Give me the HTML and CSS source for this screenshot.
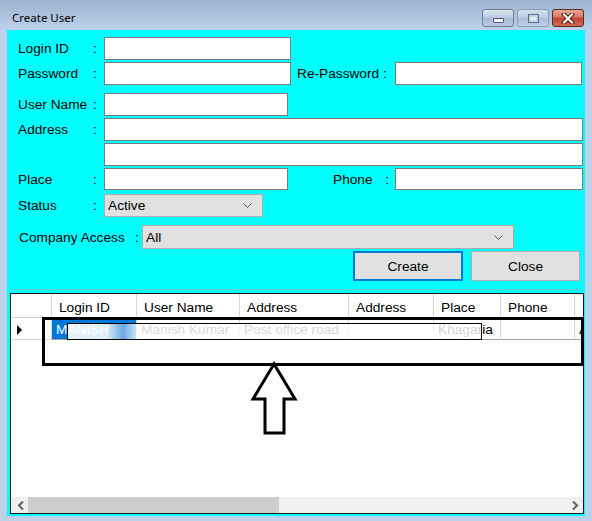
FILE: index.html
```html
<!DOCTYPE html>
<html>
<head>
<meta charset="utf-8">
<link rel="stylesheet" href="styles.css">
</head>
<body>
<div class="window">
  <div class="titlebar">
    <span class="title">Create User</span>
    <div class="tbtns">
      <div class="tbtn min"><span class="dash"></span></div>
      <div class="tbtn max"><span class="sq"></span></div>
      <div class="tbtn close">
        <svg width="14" height="11" viewBox="0 0 14 11"><path d="M3 1.5 L11 9.5 M11 1.5 L3 9.5" stroke="#4a1a14" stroke-width="4" stroke-linecap="square"/><path d="M3 1.5 L11 9.5 M11 1.5 L3 9.5" stroke="#fff" stroke-width="2.2" stroke-linecap="square"/></svg>
      </div>
    </div>
  </div>
  <div class="client">
    <div class="row r1">
      <span class="lbl">Login ID</span><span class="colon">:</span>
      <div class="input w187"></div>
    </div>
    <div class="row r2">
      <span class="lbl">Password</span><span class="colon">:</span>
      <div class="input w187"></div>
      <span class="relbl">Re-Password :</span>
      <div class="input w187"></div>
    </div>
    <div class="row r3">
      <span class="lbl">User Name</span><span class="colon">:</span>
      <div class="input w184"></div>
    </div>
    <div class="row r4">
      <span class="lbl">Address</span><span class="colon">:</span>
      <div class="input w479"></div>
    </div>
    <div class="row r5">
      <span class="lbl"></span><span class="colon"></span>
      <div class="input w479"></div>
    </div>
    <div class="row r6">
      <span class="lbl">Place</span><span class="colon">:</span>
      <div class="input w184 h22"></div>
      <span class="phone"><span>Phone</span><span class="pcolon">:</span></span>
      <div class="input w188 h22"></div>
    </div>
    <div class="row r7">
      <span class="lbl">Status</span><span class="colon">:</span>
      <div class="select w159"><span>Active</span>
        <svg class="chev" width="9" height="5" viewBox="0 0 9 5"><path d="M0.5 0.5 L4.5 4.5 L8.5 0.5" fill="none" stroke="#555" stroke-width="1"/></svg>
      </div>
    </div>
    <div class="row r8">
      <span class="lbl wide">Company Access</span><span class="colon narrow">:</span>
      <div class="select w372"><span>All</span>
        <svg class="chev" width="9" height="5" viewBox="0 0 9 5"><path d="M0.5 0.5 L4.5 4.5 L8.5 0.5" fill="none" stroke="#555" stroke-width="1"/></svg>
      </div>
    </div>
    <div class="row r9">
      <button class="btn create">Create</button>
      <button class="btn closebtn">Close</button>
    </div>
    <div class="sep"></div>
    <div class="grid">
      <div class="gtable">
        <div class="ghead">
          <div class="c rh"></div>
          <div class="c">Login ID</div>
          <div class="c">User Name</div>
          <div class="c">Address</div>
          <div class="c">Address</div>
          <div class="c">Place</div>
          <div class="c">Phone</div>
          <div class="c last"></div>
        </div>
        <div class="grow">
          <div class="c rh"><svg width="6" height="10" viewBox="0 0 6 10"><path d="M0 0 L5 5 L0 10 Z" fill="#000"/></svg></div>
          <div class="c sel">MANISH</div>
          <div class="c">Manish Kumar</div>
          <div class="c">Post office road</div>
          <div class="c"></div>
          <div class="c">Khagaria</div>
          <div class="c"></div>
          <div class="c last">A</div>
        </div>
      </div>
      <div class="hscroll">
        <svg class="arr" width="8" height="9" viewBox="0 0 8 9"><path d="M6 0.5 L2 4.5 L6 8.5" fill="none" stroke="#606060" stroke-width="2"/></svg>
        <div class="thumb"></div>
        <svg class="arr right" width="8" height="9" viewBox="0 0 8 9"><path d="M2 0.5 L6 4.5 L2 8.5" fill="none" stroke="#606060" stroke-width="2"/></svg>
      </div>
    </div>
  </div>
  <div class="redact"></div>
  <div class="annot"></div>
  <svg class="arrow" width="48" height="78" viewBox="0 0 48 78"><path d="M24 4 L3 39 L15 39 L15 73 L34 73 L34 39 L45 39 Z" fill="#fff" stroke="#000" stroke-width="3" stroke-linejoin="miter"/></svg>
</div>
</body>
</html>
```
FILE: styles.css
```css
* { box-sizing: border-box; }
html, body { margin: 0; padding: 0; }
body { width: 592px; height: 521px; overflow: hidden; background: #bcd1ea; }
.window {
  position: relative;
  width: 592px; height: 521px;
  background: #bdd2ea;
  display: flex; flex-direction: column;
  font-family: "Liberation Sans", Arial, sans-serif;
}
.titlebar {
  height: 30px;
  background: linear-gradient(#9cb2ce, #b3c8e2 70%, #bcd1ea);
  display: flex; align-items: flex-start;
  position: relative;
}
.title {
  font-family: "Noto Sans", "Open Sans", sans-serif;
  font-size: 11.5px; color: #000;
  margin: 10px 0 0 12px;
}
.tbtns { margin-left: auto; display: flex; gap: 3px; margin-top: 9px; margin-right: 8px; }
.tbtn {
  width: 32px; height: 18px; border-radius: 3px;
  border: 1px solid #6c7d98;
  display: flex; align-items: center; justify-content: center;
}
.min { background: linear-gradient(#dbe5f1, #bccce0 45%, #a6badb 50%, #b9cbe3); }
.max { background: linear-gradient(#d4e0ee, #bccde2 45%, #acc0dc 50%, #bfd0e6); border-color: #8a9cb6; }
.close { background: linear-gradient(#e8a898, #d67860 45%, #c4452f 50%, #cf6a50); border-color: #5d2a24; }
.dash { width: 11px; height: 5px; background: #fff; border: 1px solid #4b5870; border-radius: 1px; margin-top: 4px; }
.sq { width: 11px; height: 9px; border: 1px solid #5c6a82; background: #e6edf6; box-shadow: inset 0 0 0 2px #c8d5e6; }
.close svg { display: block; }
.client {
  flex: 1;
  margin: 0 7px 5px 7px;
  background: #00ffff;
  display: flex; flex-direction: column;
  font-size: 13.7px; color: #000;
}
.row { display: flex; align-items: center; padding-left: 11px; }
.lbl { width: 75px; white-space: nowrap; }
.lbl.wide { width: 117px; padding-left: 1px; }
.colon { width: 11px; }
.colon.narrow { width: 7px; }
.input { height: 23px; background: #fff; border: 1px solid #7a7a7a; }
.h22 { height: 22px; }
.w187 { width: 187px; }
.w184 { width: 184px; }
.w188 { width: 188px; }
.w479 { width: 479px; }
.w159 { width: 159px; }
.w372 { width: 372px; }
.relbl { width: 98px; margin-left: 6px; white-space: nowrap; }
.phone { width: 107px; display: flex; padding-left: 45px; }
.pcolon { margin-left: auto; margin-right: 6px; }
.r1 { margin-top: 7px; }
.r2 { margin-top: 2px; }
.r3 { margin-top: 8px; }
.r4, .r5, .r6 { margin-top: 2px; }
.r7 { margin-top: 4px; }
.r8 { margin-top: 8px; }
.r9 { margin-top: 2px; padding-left: 346px; gap: 8px; }
.select {
  height: 23px; background: #e1e1e1; border: 1px solid #adadad;
  display: flex; align-items: center; padding-left: 3px;
}
.r8 .select { height: 24px; }
.chev { margin-left: auto; margin-right: 10px; }
.btn {
  height: 30px; background: #e1e1e1; border: 1px solid #adadad;
  font-family: "Liberation Sans", Arial, sans-serif; font-size: 13.7px; color: #000;
  padding: 0; margin: 0;
}
.create { width: 110px; border: 2px solid #0078d7; }
.closebtn { width: 109px; }
.sep { height: 1px; margin: 8px 5px 0 5px; background: #6cc6c6; }
.grid {
  margin: 3px 0 0 3px;
  width: 574px; height: 221px;
  border: 1px solid #1a1a1a;
  background: #fff;
  display: flex; flex-direction: column;
  overflow: hidden;
}
.gtable { flex: 1; overflow: hidden; }
.ghead, .grow {
  display: grid;
  grid-template-columns: 41px 85px 103px 109px 85px 67px 74px 60px;
  white-space: nowrap;
}
.ghead { height: 24px; }
.grow { height: 22px; }
.c {
  border-right: 1px solid #d6d6d6;
  display: flex; align-items: center;
  padding-left: 7px; padding-top: 2px; overflow: hidden;
}
.ghead .c { border-bottom: 1px solid #d6d6d6; padding-top: 3px; }
.grow .c { border-bottom: 1px solid #a0a0a0; padding-left: 4px; }
.c.rh { padding-left: 6px; }
.grow .c.rh { border-bottom-color: #d6d6d6; }
.c.last { border-right: none; }
.sel { background: #0078d7; color: #fff; }
.hscroll {
  height: 16px; background: #f0f0f0;
  display: flex; align-items: center; position: relative;
}
.arr { margin-left: 6px; }
.arr.right { margin-left: auto; margin-right: 4px; }
.thumb { height: 16px; width: 251px; background: #cdcdcd; margin-left: 3px; }
.redact {
  position: absolute; left: 67px; top: 323px; width: 415px; height: 17px;
  border: 1px solid #000;
  background: linear-gradient(to right, rgba(255,255,255,0.9) 0, rgba(255,255,255,0.88) 38px, rgba(150,190,235,0.7) 55px, rgba(255,255,255,0.85) 70px, rgba(255,255,255,0.82) 100%);
}
.annot {
  position: absolute; left: 42px; top: 317px; width: 542px; height: 49px;
  border: 3px solid #000;
}
.arrow { position: absolute; left: 250px; top: 360px; }
```
